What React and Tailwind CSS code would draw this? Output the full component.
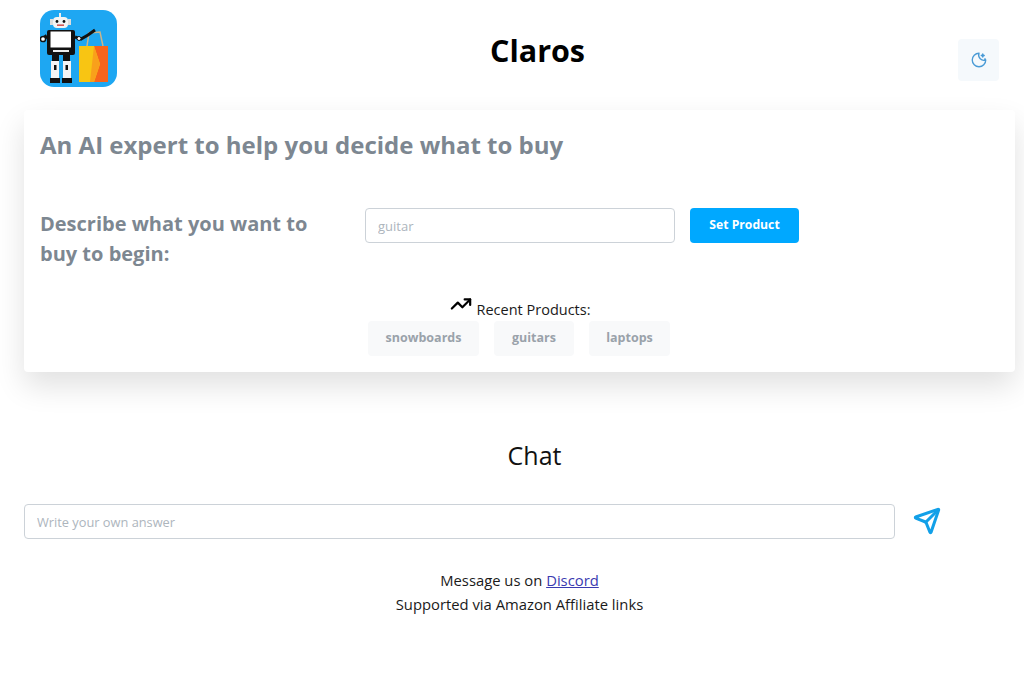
import React from 'react';
import { TrendingUp, Send } from 'lucide-react';

const font = "font-['Open_Sans','Noto_Sans',sans-serif]";

const recentProducts = ['snowboards', 'guitars', 'laptops'];

const Logo = () => (
  <svg viewBox="0 0 77 77" className="w-[77px] h-[77px] rounded-[14px] shrink-0">
    <rect width="77" height="77" fill="#1ea7f2" />
    {/* bag */}
    <path d="M47 36 L49 23 L60 22 L63 36" fill="none" stroke="#c9b48c" strokeWidth="1.5" />
    <rect x="39" y="36" width="29" height="36" fill="#f8c513" />
    <path d="M54 36 L68 36 L68 72 L54 72 L60 54 Z" fill="#f7641b" />
    <path d="M54 36 L60 54 L54 72 L50 72 Z" fill="#f9a01b" />
    {/* head */}
    <rect x="19" y="3" width="2" height="4" fill="#eee" />
    <rect x="13" y="7" width="15" height="11" rx="4" fill="#f4f4f4" />
    <circle cx="17" cy="11.5" r="1.4" fill="#111" />
    <circle cx="24" cy="11.5" r="1.4" fill="#111" />
    <rect x="17" y="14.5" width="7" height="1.3" fill="#c33" />
    <rect x="10" y="9" width="3" height="6" fill="#ddd" />
    <rect x="28" y="9" width="3" height="6" fill="#ddd" />
    {/* body */}
    <rect x="7" y="20" width="28" height="25" rx="2" fill="#111" />
    <rect x="10.5" y="21.5" width="20.5" height="16" fill="#fff" />
    <rect x="13" y="40" width="16" height="2" fill="#eee" />
    {/* arms */}
    <path d="M7 26 L1 30" stroke="#111" strokeWidth="4" fill="none" />
    <path d="M35 27 L41 29 L48 25 L55 20" stroke="#111" strokeWidth="3" fill="none" />
    <circle cx="3" cy="29" r="2.6" fill="#fff" stroke="#111" strokeWidth="1.5" />
    <circle cx="39" cy="28.5" r="2" fill="#fff" stroke="#111" />
    {/* legs */}
    <rect x="12" y="45" width="7" height="6" fill="#111" />
    <rect x="23" y="45" width="7" height="6" fill="#111" />
    <rect x="11" y="51" width="8" height="17" fill="#f4f4f4" />
    <rect x="23" y="51" width="8" height="17" fill="#f4f4f4" />
    <rect x="14" y="55" width="2.5" height="5" fill="#111" />
    <rect x="25.5" y="55" width="2.5" height="5" fill="#111" />
    <rect x="10" y="68" width="10" height="5" fill="#111" />
    <rect x="22" y="68" width="10" height="5" fill="#111" />
  </svg>
);

const MoonStars = () => (
  <svg viewBox="0 0 24 24" className="w-[18px] h-[18px]" fill="none" stroke="#4a9bd6" strokeWidth="1.8" strokeLinecap="round" strokeLinejoin="round">
    <path d="M12 3a9 9 0 1 0 9 9 7 7 0 0 1-9-9z" />
    <path d="M17 4a2 2 0 0 0 2 2 2 2 0 0 0-2 2 2 2 0 0 0-2-2 2 2 0 0 0 2-2z" />
    <circle cx="20" cy="11" r="0.5" />
  </svg>
);

const App = () => {
  return (
    <div className={`${font} bg-white min-h-[694px] w-[1024px] overflow-hidden text-[#1a1a1a]`}>
      <header className="flex items-start justify-between pl-10 pr-[25px] pt-[10px]">
        <Logo />
        <h1 className="text-[30.5px] leading-none font-bold text-black mt-[25px]">Claros</h1>
        <button className="w-[41px] h-[42px] mt-[29px] flex items-center justify-center rounded bg-[#f5f9fc]">
          <MoonStars />
        </button>
      </header>

      <section className="mx-6 mt-[23px] mr-[9px] h-[262px] bg-white rounded shadow-[0_14px_30px_rgba(0,0,0,0.12)] px-4 pt-[18px]">
        <h2 className="text-[24px] leading-[34px] font-bold text-[#7d8791]">An AI expert to help you decide what to buy</h2>

        <div className="flex items-start mt-[45px]">
          <p className="w-[325px] mt-[2px] text-[20px] leading-[30px] font-bold text-[#7d8791]">
            Describe what you want to<br />buy to begin:
          </p>
          <input
            className="w-[310px] h-[35px] mt-[1px] px-3 text-[13px] border border-[#ccd2d8] rounded bg-white outline-none placeholder:text-[#adb5bd]"
            placeholder="guitar"
          />
          <button className="w-[109px] h-[35px] mt-[1px] ml-[15px] bg-[#00a8ff] text-white text-[12.2px] font-bold rounded">
            Set Product
          </button>
        </div>

        <div className="flex flex-col items-center mt-[30px] ml-[-1px]">
          <div className="flex items-start pl-[2px] text-[14.5px] leading-[20px] h-[22px]">
            <TrendingUp className="w-[22px] h-[22px] text-black -mt-[6px] mr-[5px]" strokeWidth={2.4} />
            <span className="mt-[1px]">Recent Products:</span>
          </div>
          <div className="flex gap-[15px]">
            {recentProducts.map((item) => (
              <span key={item} className="h-[35px] w-[111px] [&:nth-child(2)]:w-[80px] [&:nth-child(3)]:w-[81px] flex items-center justify-center rounded bg-[#f8f9fa] text-[12.5px] font-bold text-[#9aa2aa]">
                {item}
              </span>
            ))}
          </div>
        </div>
      </section>

      <h3 className="text-[25px] leading-[34px] text-center mt-[66px] ml-[45px] text-[#111]">Chat</h3>

      <div className="flex items-center pl-6 mt-[32px]">
        <input
          className="w-[871px] h-[35px] px-3 text-[12.8px] border border-[#ccd2d8] rounded bg-white outline-none placeholder:text-[#adb5bd]"
          placeholder="Write your own answer"
        />
        <Send className="w-[28px] h-[28px] ml-[18px] text-[#12a0e8] -mt-[1px]" strokeWidth={2.6} />
      </div>

      <footer className="mt-[29px] text-center text-[14.8px] leading-[24px] ml-[15px]">
        <p>Message us on <a href="#" className="underline text-[#3a3ab0]">Discord</a></p>
        <p>Supported via Amazon Affiliate links</p>
      </footer>
    </div>
  );
};

export default App;
